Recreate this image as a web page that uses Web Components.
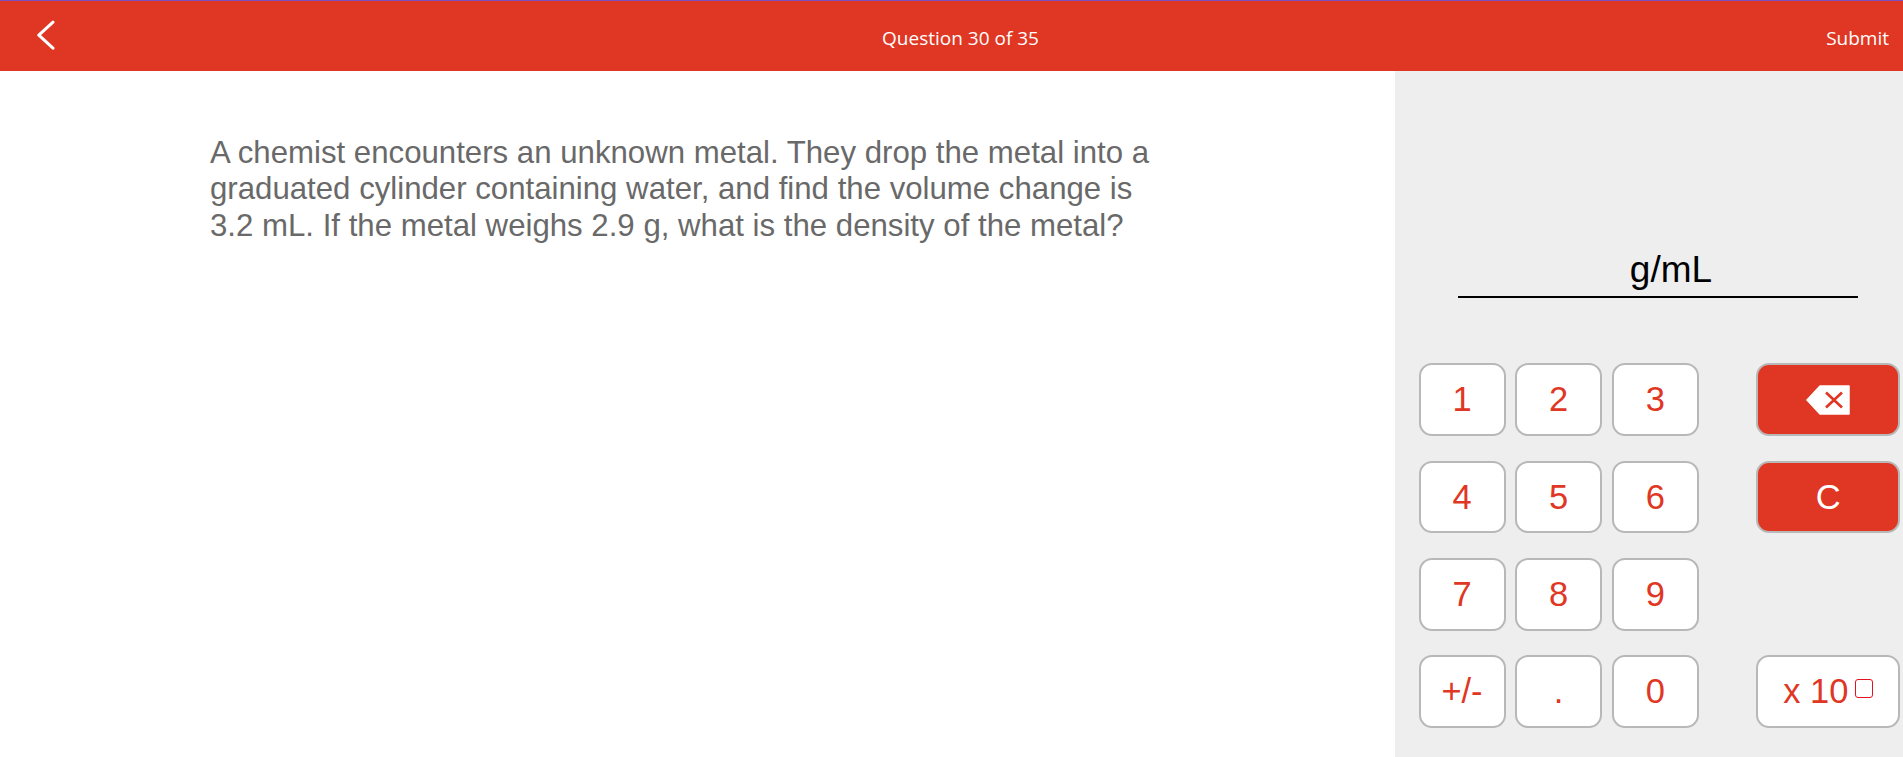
<!DOCTYPE html>
<html>
<head>
<meta charset="utf-8">
<title>Question 30 of 35</title>
<style>
  html, body { margin: 0; height: 100%; background: #fff; }
  body { display: flex; flex-direction: column; height: 757px; overflow: hidden; font-family: "Liberation Sans", Arial, sans-serif; }
</style>
</head>
<body>
<quiz-header>
  <span slot="title">Question 30 of 35</span>
  <span slot="action">Submit</span>
</quiz-header>
<quiz-body>
  <quiz-question>A chemist encounters an unknown metal. They drop the metal into a graduated cylinder containing water, and find the volume change is 3.2 mL. If the metal weighs 2.9 g, what is the density of the metal?</quiz-question>
  <answer-panel slot="panel"></answer-panel>
</quiz-body>

<script>
// top bar with back arrow, question counter and submit
class QuizHeader extends HTMLElement {
  constructor() {
    super();
    const shadow = this.attachShadow({mode: 'open'});
    shadow.innerHTML = `
      <style>
        :host {
          display: grid;
          grid-template-columns: 1fr auto 1fr;
          align-items: center;
          flex: none;
          height: 70px;
          box-sizing: content-box;
          background: #df3723;
          border-top: 1px solid #7b4fc0;
          color: #fff;
          font-family: "Open Sans", "Noto Sans", sans-serif;
          font-size: 19px;
        }
        .back { display: flex; padding: 0 0 2px 35px; }
        .title { padding: 4px 0 0 18px; }
        .action { justify-self: end; padding: 4px 14px 0 0; }
        svg { display: block; }
      </style>
      <div class="back">
        <svg width="20" height="32" viewBox="0 0 20 32" fill="none" stroke="#fff" stroke-width="3" stroke-linecap="round" stroke-linejoin="round">
          <path d="M18 3.2 L3.8 16.2 L18 29.2"/>
        </svg>
      </div>
      <div class="title"><slot name="title"></slot></div>
      <div class="action"><slot name="action"></slot></div>
    `;
  }
}

// main area: question on the left, panel on the right
class QuizBody extends HTMLElement {
  constructor() {
    super();
    const shadow = this.attachShadow({mode: 'open'});
    shadow.innerHTML = `
      <style>
        :host { display: flex; flex: 1; min-height: 0; }
        .left { flex: 1; min-width: 0; }
        .right { flex: none; width: 508px; }
      </style>
      <div class="left"><slot></slot></div>
      <div class="right"><slot name="panel"></slot></div>
    `;
  }
}

class QuizQuestion extends HTMLElement {
  constructor() {
    super();
    const shadow = this.attachShadow({mode: 'open'});
    shadow.innerHTML = `
      <style>
        :host {
          display: block;
          padding: 64px 0 0 210px;
          width: 970px;
          color: #696969;
          font-family: "Liberation Sans", Arial, sans-serif;
          font-size: 31.2px;
          line-height: 36.3px;
        }
      </style>
      <slot></slot>
    `;
  }
}

class KeyButton extends HTMLElement {
  constructor() {
    super();
    const shadow = this.attachShadow({mode: 'open'});
    shadow.innerHTML = `
      <style>
        :host {
          display: flex;
          align-items: center;
          justify-content: center;
          box-sizing: border-box;
          height: 72.67px;
          background: #fff;
          border: 2px solid #b8b8b8;
          border-radius: 13px;
          color: #df3723;
          font-family: "Liberation Sans", Arial, sans-serif;
          font-size: 34.5px;
        }
        :host([primary]) { background: #df3723; color: #fff; }
      </style>
      <slot></slot>
    `;
  }
}

// grey panel: unit field and the keypad
class AnswerPanel extends HTMLElement {
  constructor() {
    super();
    const shadow = this.attachShadow({mode: 'open'});
    const digits = ['1','2','3','4','5','6','7','8','9','+/-','.','0'];
    shadow.innerHTML = `
      <style>
        :host {
          display: block;
          box-sizing: border-box;
          height: 100%;
          padding-top: 175px;
          background: #eee;
          font-family: "Liberation Sans", Arial, sans-serif;
        }
        .field {
          box-sizing: border-box;
          width: 400px;
          height: 52px;
          margin-left: 63px;
          padding-left: 26px;
          border-bottom: 2px solid #000;
          color: #000;
          font-size: 37px;
          line-height: 48px;
          text-align: center;
        }
        .keys { display: flex; margin: 65.4px 0 0 23.5px; }
        .digits, .side {
          display: grid;
          grid-template-rows: repeat(4, 72.67px);
          row-gap: 24.67px;
        }
        .digits { grid-template-columns: repeat(3, 87px); column-gap: 9.67px; }
        .side { grid-template-columns: 144px; margin-left: 57.5px; }
        .exp { grid-row: 4; }
        .box {
          display: inline-block;
          box-sizing: border-box;
          width: 18px;
          height: 19px;
          margin: 0 0 6px 7px;
          border: 1px solid #e8101c;
          border-radius: 3px;
          vertical-align: middle;
        }
        svg { display: block; }
      </style>
      <div class="field">g/mL</div>
      <div class="keys">
        <div class="digits">
          ${digits.map(d => `<key-button>${d}</key-button>`).join('')}
        </div>
        <div class="side">
          <key-button primary>
            <svg width="44" height="30" viewBox="0 0 44 30">
              <path fill="#fff" d="M14 1 H43 V29 H14 L1 15 Z" stroke="#fff" stroke-width="1.5" stroke-linejoin="round"/>
              <path fill="none" stroke="#df3723" stroke-width="2.6" d="M20 7.5 L36 22.5 M36 7.5 L20 22.5"/>
            </svg>
          </key-button>
          <key-button primary>C</key-button>
          <key-button class="exp">x 10<span class="box"></span></key-button>
        </div>
      </div>
    `;
  }
}

customElements.define('quiz-header', QuizHeader);
customElements.define('quiz-body', QuizBody);
customElements.define('quiz-question', QuizQuestion);
customElements.define('key-button', KeyButton);
customElements.define('answer-panel', AnswerPanel);
</script>
</body>
</html>
